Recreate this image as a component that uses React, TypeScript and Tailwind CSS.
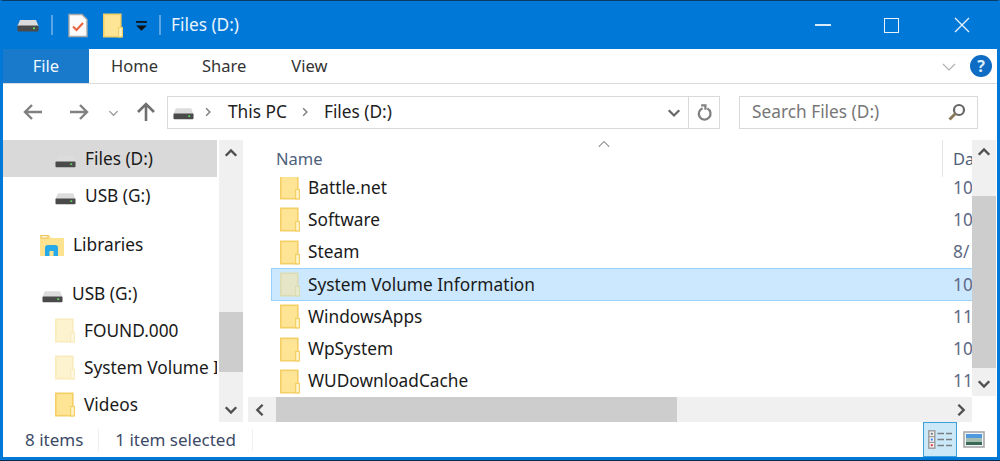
import React from "react";

const font = { fontFamily: '"Noto Sans", "Open Sans", sans-serif' };

function Folder({ tone = "normal", className = "" }: { tone?: "normal" | "faded" | "dim"; className?: string }) {
  const fill = { normal: "#fee596", faded: "#fdf3cf", dim: "#e5e6c8" }[tone];
  const stroke = { normal: "#f3cf66", faded: "#f9ebbb", dim: "#dcdcb2" }[tone];
  const tab = { normal: "#fff3c8", faded: "#fef8e4", dim: "#e9ead2" }[tone];
  return (
    <svg viewBox="0 0 20 24" className={className}>
      <rect x="0.8" y="0.8" width="17" height="22.4" fill={fill} stroke={stroke} strokeWidth="1.6" />
      <rect x="15.6" y="14" width="3.8" height="9.4" fill={tab} stroke={stroke} strokeWidth="1.2" />
    </svg>
  );
}

function Drive({ className = "" }: { className?: string }) {
  return (
    <svg viewBox="0 0 22 13" className={className}>
      <path d="M3 1h16l2.5 6h-21z" fill="#dcdcdc" />
      <rect x="0.5" y="6.5" width="21" height="6" rx="1" fill="#4a4a4a" />
      <rect x="16" y="8.5" width="2" height="1.6" fill="#5fe35f" />
    </svg>
  );
}

function Chevron({ dir, className = "", color = "#555", w = 2.2 }: { dir: "up" | "down" | "left" | "right"; className?: string; color?: string; w?: number }) {
  const d = {
    up: "M2 10l6-6 6 6",
    down: "M2 6l6 6 6-6",
    left: "M11 2L5 8l6 6",
    right: "M5 2l6 6-6 6",
  }[dir];
  return (
    <svg viewBox="0 0 16 16" className={className}>
      <path d={d} fill="none" stroke={color} strokeWidth={w} />
    </svg>
  );
}

function SideRow({ pad, icon, label, selected = false, mt = "" }: { pad: string; icon: React.ReactNode; label: string; selected?: boolean; mt?: string }) {
  return (
    <div className={`flex h-[37px] shrink-0 items-center whitespace-nowrap overflow-hidden ${mt} ${selected ? "bg-[#d9d9d9]" : ""}`}>
      <div className={`flex items-center shrink-0 ${pad}`}>{icon}</div>
      <span className="text-[17.3px] text-[#1a1a1a]">{label}</span>
    </div>
  );
}

function FileRow({ name, date, selected = false }: { name: string; date: string; selected?: boolean }) {
  return (
    <div className={`flex h-[32.3px] shrink-0 items-center border pl-[8px] ${selected ? "border-[#99d1ff] bg-[#cce8ff]" : "border-transparent"}`}>
      <Folder tone={selected ? "dim" : "normal"} className="w-[20px] h-[25px] shrink-0" />
      <span className="ml-[8px] w-[645px] shrink-0 text-[17.3px] text-[#1a1a1a]">{name}</span>
      <span className="text-[17.3px] text-[#5f6a85]">{date}</span>
    </div>
  );
}

export default function App() {
  return (
    <div style={font} className="w-[1000px] h-[461px] overflow-hidden bg-[#0a2a4a] pb-px">
      <div className="flex h-[460px] flex-col border-x-[3px] border-b-[3px] border-t border-x-[#0078d7] border-b-[#0078d7] border-t-[#0a3a66] bg-white">
        {/* Title bar */}
        <div className="flex h-[48px] shrink-0 items-center bg-[#0078d7] text-white">
          <Drive className="ml-[14px] w-[22px] h-[13px]" />
          <div className="ml-[12px] h-[20px] w-[2px] bg-[#5aa5e3]" />
          <svg viewBox="0 0 20 24" className="ml-[15px] w-[20px] h-[25px]">
            <path d="M1 1h13l5 5v17H1z" fill="#fbfbfb" stroke="#a8a8a8" strokeWidth="1.4" />
            <path d="M5 13l3.5 3.5L15 9.5" fill="none" stroke="#e8603c" strokeWidth="2" />
          </svg>
          <Folder className="ml-[15px] w-[20px] h-[25px]" />
          <svg viewBox="0 0 12 10" className="ml-[12px] mt-[3px] w-[13px] h-[11px]">
            <rect x="1" y="0" width="10" height="1.6" fill="#111" />
            <path d="M1 4h10l-5 5z" fill="#111" />
          </svg>
          <div className="ml-[11px] h-[20px] w-[2px] bg-[#5aa5e3]" />
          <span className="ml-[10px] text-[17.3px] text-[#e8f3fc]">Files (D:)</span>
          <div className="ml-auto flex items-center pr-[27px]">
            <div className="h-[1.5px] w-[16px] bg-[#d8ebfa]" />
            <div className="ml-[53px] h-[15px] w-[15px] border-[1.5px] border-[#e8f3fc]" />
            <svg viewBox="0 0 16 16" className="ml-[55px] w-[16px] h-[16px]">
              <path d="M1 1l14 14M15 1L1 15" stroke="#e8f3fc" strokeWidth="1.3" />
            </svg>
          </div>
        </div>

        {/* Ribbon tabs */}
        <div className="flex h-[35px] shrink-0 items-center border-b-[1.5px] border-[#dadbdc] text-[16.5px] text-[#333]">
          <div className="flex h-full w-[86px] items-center justify-center bg-[#1979ca] text-[#f2f8fd]">File</div>
          <span className="ml-[22px]">Home</span>
          <span className="ml-[44px]">Share</span>
          <span className="ml-[45px]">View</span>
          <div className="ml-auto flex items-center pr-[5px]">
            <Chevron dir="down" color="#b0b0b0" w={1.2} className="w-[16px] h-[16px]" />
            <div className="ml-[13px] flex h-[22px] w-[22px] items-center justify-center rounded-full bg-[#0f6cc4] text-[16px] font-bold text-[#dff0fc]">?</div>
          </div>
        </div>

        {/* Nav row */}
        <div className="flex h-[56px] shrink-0 items-center">
          <svg viewBox="0 0 20 18" className="ml-[20px] w-[20px] h-[18px]">
            <path d="M19 9H2M9 2L2 9l7 7" fill="none" stroke="#808080" strokeWidth="2.4" />
          </svg>
          <svg viewBox="0 0 20 18" className="ml-[26px] w-[20px] h-[18px]">
            <path d="M1 9h17M11 2l7 7-7 7" fill="none" stroke="#808080" strokeWidth="2.4" />
          </svg>
          <Chevron dir="down" color="#9a9a9a" w={2} className="ml-[19px] w-[11px] h-[11px]" />
          <svg viewBox="0 0 20 20" className="ml-[17px] w-[20px] h-[20px]">
            <path d="M10 19V2M2 10l8-8 8 8" fill="none" stroke="#707070" strokeWidth="2.6" />
          </svg>
          <div className="ml-[11px] flex h-[33px] w-[553px] items-center border-[1.5px] border-[#d9d9d9]">
            <Drive className="ml-[5px] mt-[3px] w-[21px] h-[13px]" />
            <Chevron dir="right" color="#808080" w={2.4} className="ml-[9px] w-[10px] h-[10px]" />
            <span className="ml-[15px] text-[17.3px] text-[#222]">This PC</span>
            <Chevron dir="right" color="#808080" w={2.4} className="ml-[13px] w-[10px] h-[10px]" />
            <span className="ml-[14px] text-[17.3px] text-[#222]">Files (D:)</span>
            <Chevron dir="down" color="#666" w={2.6} className="ml-auto mr-[7px] w-[14px] h-[14px]" />
            <div className="flex h-full w-[31px] items-center justify-center border-l-[1.5px] border-[#d9d9d9]">
              <svg viewBox="0 0 18 18" className="w-[17px] h-[17px]">
                <path d="M7 4.5a6.2 6.2 0 1 0 5 .3M5.5 1.5H10V6" fill="none" stroke="#808080" strokeWidth="2.4" />
              </svg>
            </div>
          </div>
          <div className="ml-[19px] flex h-[33px] w-[239px] items-center border-[1.5px] border-[#d9d9d9] pl-[12px] pr-[11px]">
            <span className="text-[17.3px] text-[#777]">Search Files (D:)</span>
            <svg viewBox="0 0 18 18" className="ml-auto w-[18px] h-[18px]">
              <circle cx="11" cy="7" r="5" fill="none" stroke="#666" strokeWidth="2.2" />
              <path d="M7.5 10.5L1.5 16.5" stroke="#8a7a5a" strokeWidth="3" />
            </svg>
          </div>
        </div>

        {/* Main */}
        <div className="flex h-[282px] shrink-0">
          {/* Sidebar */}
          <div className="w-[214px] shrink-0 overflow-hidden">
            <SideRow selected pad="pl-[52px] pr-[9px]" icon={<Drive className="w-[21px] h-[13px] mt-[6px]" />} label="Files (D:)" />
            <SideRow pad="pl-[52px] pr-[9px]" icon={<Drive className="w-[21px] h-[13px] mt-[6px]" />} label="USB (G:)" />
            <SideRow
              mt="mt-[12px]"
              pad="pl-[37px] pr-[8px]"
              icon={
                <svg viewBox="0 0 25 22" className="w-[25px] h-[22px]">
                  <path d="M0 1h9l2 3h13v18H0z" fill="#fde28f" />
                  <rect x="1" y="1.5" width="7" height="2.5" fill="#fff6d8" stroke="#e9b949" strokeWidth="0.8" />
                  <path d="M5 22v-8a3 3 0 0 1 3-3h7a3 3 0 0 1 3 3v8h-4.5v-5h-4v5z" fill="#25a9e8" />
                </svg>
              }
              label="Libraries"
            />
            <SideRow mt="mt-[12px]" pad="pl-[39px] pr-[9px]" icon={<Drive className="w-[21px] h-[13px] mt-[6px]" />} label="USB (G:)" />
            <SideRow pad="pl-[52px] pr-[9px]" icon={<Folder tone="faded" className="w-[20px] h-[25px]" />} label="FOUND.000" />
            <SideRow pad="pl-[52px] pr-[9px]" icon={<Folder tone="faded" className="w-[20px] h-[25px]" />} label="System Volume Information" />
            <SideRow pad="pl-[52px] pr-[9px]" icon={<Folder className="w-[20px] h-[25px]" />} label="Videos" />
          </div>
          {/* Sidebar scrollbar */}
          <div className="ml-[2px] flex w-[24px] shrink-0 flex-col items-center bg-[#f0f0f0]">
            <Chevron dir="up" color="#505050" w={2.8} className="mt-[7px] w-[14px] h-[14px]" />
            <div className="mt-[151px] h-[60px] w-full shrink-0 bg-[#cdcdcd]" />
            <Chevron dir="down" color="#505050" w={2.8} className="mt-[30px] w-[14px] h-[14px]" />
          </div>
          {/* File pane */}
          <div className="ml-[5px] flex min-w-0 flex-1">
            <div className="relative flex w-[724px] shrink-0 flex-col">
              <div className="flex h-[37px] shrink-0 items-center overflow-hidden pl-[28px]">
                <span className="mt-[2px] w-[666px] shrink-0 text-[16.5px] text-[#4c607a]">Name</span>
                <div className="h-full w-px shrink-0 bg-[#e5e5e5]" />
                <span className="ml-[10px] mt-[2px] text-[16.5px] text-[#4c607a]">Da</span>
              </div>
              <div className="absolute left-[349px] top-[-2px]">
                <Chevron dir="up" color="#9a9a9a" w={1.3} className="w-[14px] h-[14px]" />
              </div>
              <div className="min-h-0 flex-1 overflow-hidden pl-[23px]">
                <div className="mt-[-5.5px] w-[760px]">
                  <FileRow name="Battle.net" date="10" />
                  <FileRow name="Software" date="10" />
                  <FileRow name="Steam" date="8/" />
                  <FileRow selected name="System Volume Information" date="10" />
                  <FileRow name="WindowsApps" date="11" />
                  <FileRow name="WpSystem" date="10" />
                  <FileRow name="WUDownloadCache" date="11" />
                </div>
              </div>
              <div className="flex h-[25px] shrink-0 items-center bg-[#f0f0f0]">
                <Chevron dir="left" color="#505050" w={2.8} className="ml-[5px] w-[14px] h-[14px]" />
                <div className="ml-[9px] h-full w-[401px] bg-[#cdcdcd]" />
                <Chevron dir="right" color="#505050" w={2.8} className="ml-auto mr-[4px] w-[14px] h-[14px]" />
              </div>
            </div>
            <div className="flex h-[256px] w-[24px] shrink-0 flex-col items-center bg-[#f0f0f0]">
              <Chevron dir="up" color="#505050" w={2.8} className="mt-[6px] w-[14px] h-[14px]" />
              <div className="mt-[36px] h-[172px] w-full shrink-0 bg-[#cdcdcd]" />
              <Chevron dir="down" color="#505050" w={2.8} className="mt-[8px] w-[14px] h-[14px]" />
            </div>
          </div>
        </div>

        {/* Status bar */}
        <div className="flex min-h-0 flex-1 items-center text-[17px] text-[#3c4a66]">
          <span className="ml-[22px]">8 items</span>
          <div className="ml-[15px] h-[22px] w-px bg-[#efefef]" />
          <span className="ml-[16px]">1 item selected</span>
          <div className="ml-[16px] h-[22px] w-px bg-[#efefef]" />
          <div className="ml-auto flex h-full items-center pr-[12px]">
            <div className="flex h-full w-[34px] items-center justify-center border-[1.5px] border-[#3aa0dc] bg-[#cbe8f9]">
              <svg viewBox="0 0 24 19" className="w-[24px] h-[19px]">
                <rect x="0.8" y="0.8" width="6" height="17.4" fill="#f4f4f4" stroke="#9a9a9a" strokeWidth="1.4" />
                <path d="M1 6.6h6M1 12.4h6" stroke="#9a9a9a" strokeWidth="1.2" />
                <rect x="2.8" y="2.8" width="2" height="2" fill="#777" />
                <rect x="2.8" y="8.5" width="2" height="2" fill="#3b82f6" />
                <rect x="2.8" y="14.2" width="2" height="2" fill="#d9363e" />
                <path d="M9.5 3.5h6.5M18 3.5h6M9.5 9.5h6.5M18 9.5h6M9.5 15.5h6.5M18 15.5h6" stroke="#7a7f85" strokeWidth="1.5" />
              </svg>
            </div>
            <svg viewBox="0 0 22 17" className="ml-[6px] w-[22px] h-[17px]">
              <rect x="1" y="1" width="20" height="15" fill="#eef4fa" stroke="#a8a8a8" strokeWidth="1.6" />
              <rect x="3" y="3" width="16" height="4" fill="#4f9ade" />
              <rect x="3" y="7" width="16" height="4" fill="#a5bdb0" />
              <rect x="3" y="11" width="16" height="3" fill="#3a6a54" />
            </svg>
          </div>
        </div>
      </div>
    </div>
  );
}
